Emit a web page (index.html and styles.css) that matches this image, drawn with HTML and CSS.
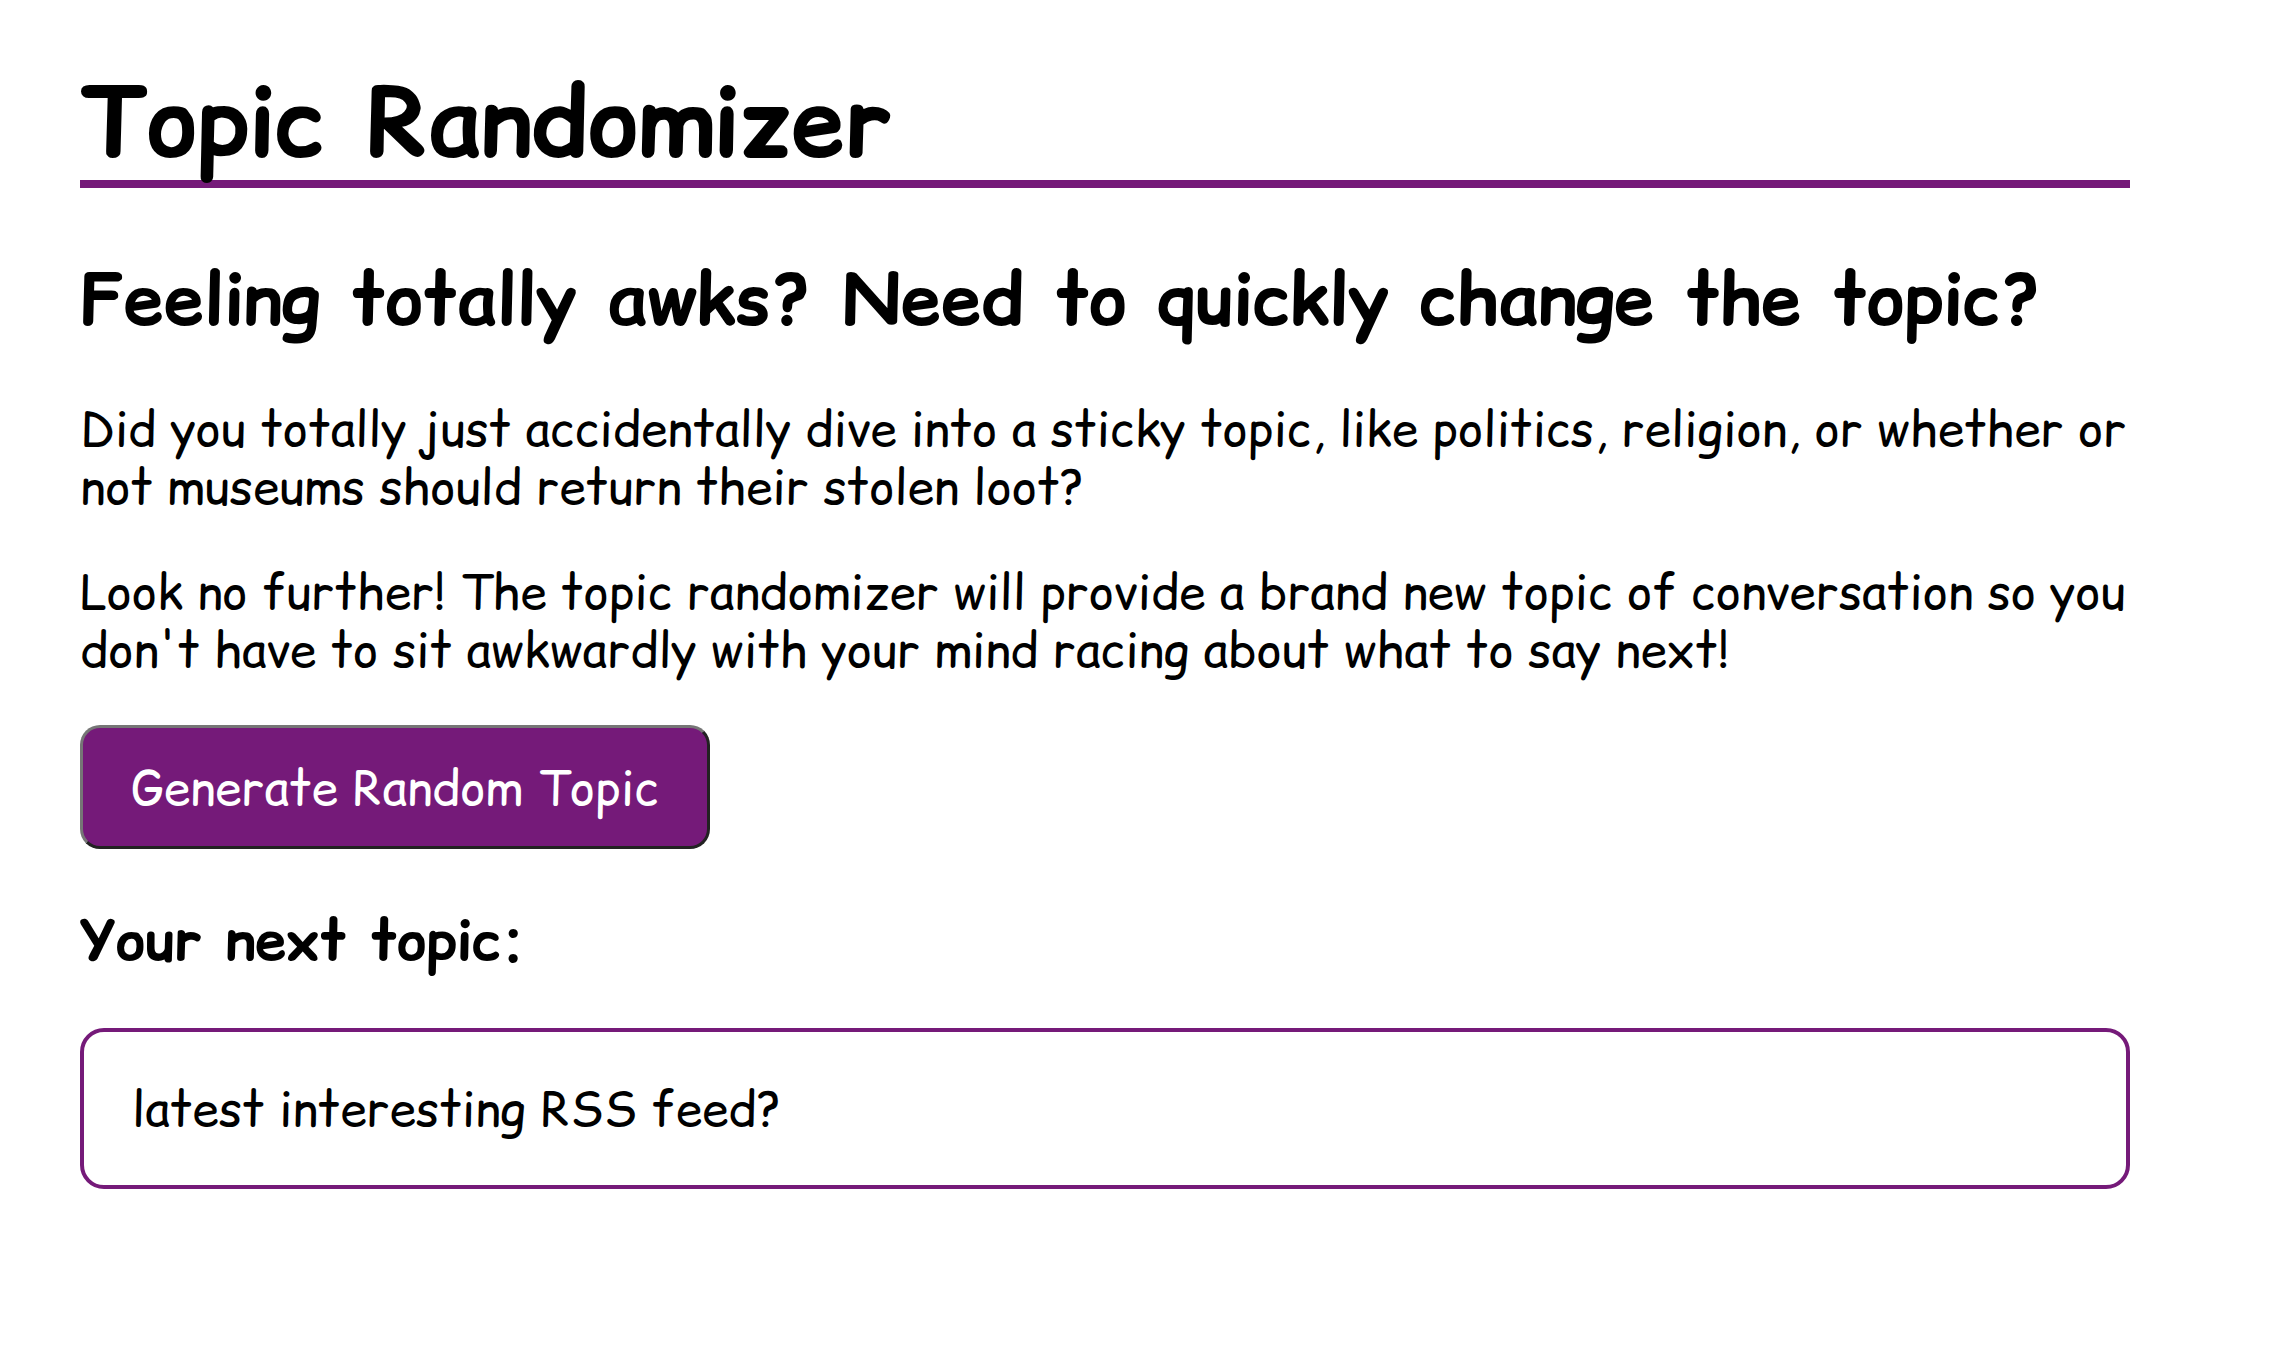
FILE: index.html
```html
<!DOCTYPE html>
<html lang="en">
<head>
<meta charset="utf-8">
<title>Topic Randomizer</title>
<link rel="stylesheet" href="styles.css">
</head>
<body>
<main class="page">
  <h1 class="title">Topic Randomizer</h1>
  <h2 class="subtitle">Feeling totally awks? Need to quickly change the topic?</h2>
  <p class="text">Did you totally just accidentally dive into a sticky topic, like politics, religion, or whether or not museums should return their stolen loot?</p>
  <p class="text text-second">Look no further! The topic randomizer will provide a brand new topic of conversation so you don't have to sit awkwardly with your mind racing about what to say next!</p>
  <button class="generate" type="button">Generate Random Topic</button>
  <h3 class="next-label">Your next topic:</h3>
  <div class="topic-box">latest interesting RSS feed?</div>
</main>
</body>
</html>
```
FILE: styles.css
```css
html, body {
  margin: 0;
  padding: 0;
  background: #ffffff;
}

body {
  font-family: "Comic Sans MS", "Comic Relief", "Comic Neue", "Lato", sans-serif;
  color: #000000;
  font-size: 48px;
  line-height: 1.2;
}

.page {
  width: 2050px;
  margin-left: 80px;
  display: flex;
  flex-direction: column;
  align-items: flex-start;
}

.title {
  align-self: stretch;
  margin: 65px 0 0 0;
  padding-bottom: 0;
  font-size: 96px;
  line-height: 115px;
  font-weight: 700;
  border-bottom: 8px solid #751a79;
}

.subtitle {
  margin: 68px 0 0 0;
  font-size: 72px;
  line-height: 86.4px;
  font-weight: 700;
}

.text {
  margin: 57.6px 0 0 0;
  font-size: 48px;
  line-height: 57.6px;
}

.text-second {
  margin-top: 48px;
}

.generate {
  margin-top: 47px;
  font-family: inherit;
  font-size: 48px;
  line-height: 57.6px;
  color: #ffffff;
  background: #751a79;
  border-width: 3px;
  border-style: solid;
  border-color: #767676 #222222 #222222 #767676;
  border-radius: 20px;
  padding: 31px 48px 29px 48px;
}

.next-label {
  margin: 58px 0 0 0;
  font-size: 56.16px;
  line-height: 67.4px;
  font-weight: 700;
}

.topic-box {
  align-self: stretch;
  margin-top: 54px;
  border: 4px solid #751a79;
  border-radius: 24px;
  padding: 48px 48px 47px 48px;
  font-size: 48px;
  line-height: 57.6px;
}
```
